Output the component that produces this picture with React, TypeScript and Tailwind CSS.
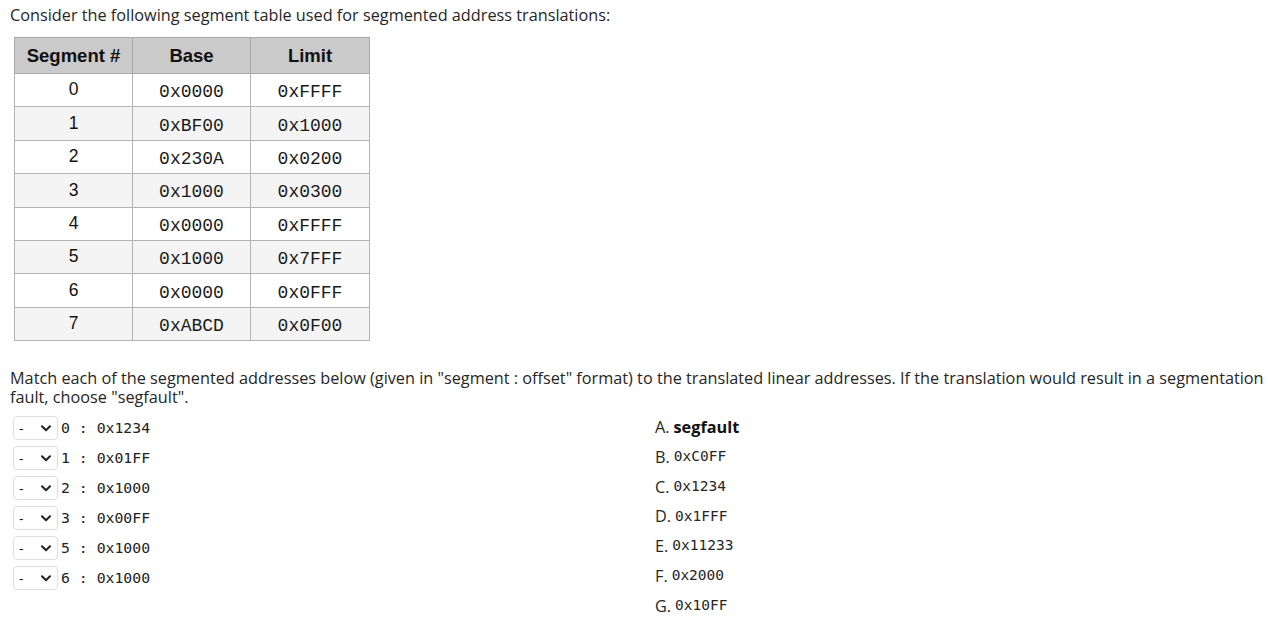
import React from "react";

const rows = [
  ["0", "0x0000", "0xFFFF"],
  ["1", "0xBF00", "0x1000"],
  ["2", "0x230A", "0x0200"],
  ["3", "0x1000", "0x0300"],
  ["4", "0x0000", "0xFFFF"],
  ["5", "0x1000", "0x7FFF"],
  ["6", "0x0000", "0x0FFF"],
  ["7", "0xABCD", "0x0F00"],
];

const items = ["0 : 0x1234", "1 : 0x01FF", "2 : 0x1000", "3 : 0x00FF", "5 : 0x1000", "6 : 0x1000"];

const answers: [string, string, boolean][] = [
  ["A.", "segfault", true],
  ["B.", "0xC0FF", false],
  ["C.", "0x1234", false],
  ["D.", "0x1FFF", false],
  ["E.", "0x11233", false],
  ["F.", "0x2000", false],
  ["G.", "0x10FF", false],
];

const mono = { fontFamily: '"DejaVu Sans Mono", monospace' };
const courier = { fontFamily: '"Liberation Mono", "Courier New", monospace' };

function Chevron() {
  return (
    <svg width="10" height="7" viewBox="0 0 10 7" fill="none">
      <path d="M1 1.2 L5 5.2 L9 1.2" stroke="#222" strokeWidth="2" strokeLinecap="round" strokeLinejoin="round" />
    </svg>
  );
}

export default function App() {
  return (
    <div className="bg-white text-[#222] w-[1268px] h-[621px] overflow-hidden pl-[10px] pt-[5px]" style={{ fontFamily: '"Open Sans", sans-serif' }}>
      <p className="text-[16.25px] leading-[20px] text-[#262626]">
        Consider the following segment table used for segmented address translations:
      </p>
      <div className="ml-[4px] mt-[12px]" style={{ fontFamily: '"Liberation Sans", Arial, sans-serif' }}>
        <table className="border-collapse border border-[#a9a9a9]">
          <thead>
            <tr className="bg-[#cacaca]">
              <th className="w-[118px] h-[36px] border border-[#a9a9a9] text-[18.5px] font-bold text-[#111] p-0">Segment #</th>
              <th className="w-[118px] h-[36px] border border-[#a9a9a9] text-[18.5px] font-bold text-[#111] p-0">Base</th>
              <th className="w-[119px] h-[36px] border border-[#a9a9a9] text-[18.5px] font-bold text-[#111] p-0">Limit</th>
            </tr>
          </thead>
          <tbody>
            {rows.map((r, i) => (
              <tr key={i} className={i % 2 === 1 ? "bg-[#f4f4f4]" : "bg-white"}>
                <td className="h-[33.4px] border border-[#b4b4b4] text-center text-[17.5px] text-[#111] p-0 leading-none">{r[0]}</td>
                <td className="h-[33.4px] border border-[#b4b4b4] text-center text-[18px] text-[#1a1a1a] p-0 pt-[4px] leading-none" style={courier}>{r[1]}</td>
                <td className="h-[33.4px] border border-[#b4b4b4] text-center text-[18px] text-[#1a1a1a] p-0 pt-[4px] leading-none" style={courier}>{r[2]}</td>
              </tr>
            ))}
          </tbody>
        </table>
      </div>
      <p className="mt-[28px] text-[16.25px] leading-[19px] text-[#262626]">
        Match each of the segmented addresses below (given in "segment : offset" format) to the translated linear addresses. If the translation would result in a segmentation fault, choose "segfault".
      </p>
      <div className="grid grid-cols-[641px_1fr] mt-[9px]">
        <div className="flex flex-col gap-[6px] pl-[3px]">
          {items.map((t, i) => (
            <div key={i} className="flex items-center h-[24px]">
              <div className="w-[45px] h-[24px] border border-[#dedede] rounded-[4px] flex items-center justify-between pl-[5px] pr-[6px] bg-white">
                <span className="text-[14px] text-[#222]">-</span>
                <Chevron />
              </div>
              <span className="ml-[3px] text-[14.8px] text-[#222] whitespace-pre" style={mono}>{t}</span>
            </div>
          ))}
        </div>
        <div className="flex flex-col gap-[5.8px] pl-[4px] -mt-[1px]">
          {answers.map(([l, v, b], i) => (
            <div key={i} className="h-[24px] flex items-center text-[16.25px] text-[#262626]">
              <span>{l}</span>
              {b ? (
                <span className="ml-[4px] font-bold text-[#111]">{v}</span>
              ) : (
                <span className="ml-[4px] text-[14.5px]" style={mono}>{v}</span>
              )}
            </div>
          ))}
        </div>
      </div>
    </div>
  );
}
